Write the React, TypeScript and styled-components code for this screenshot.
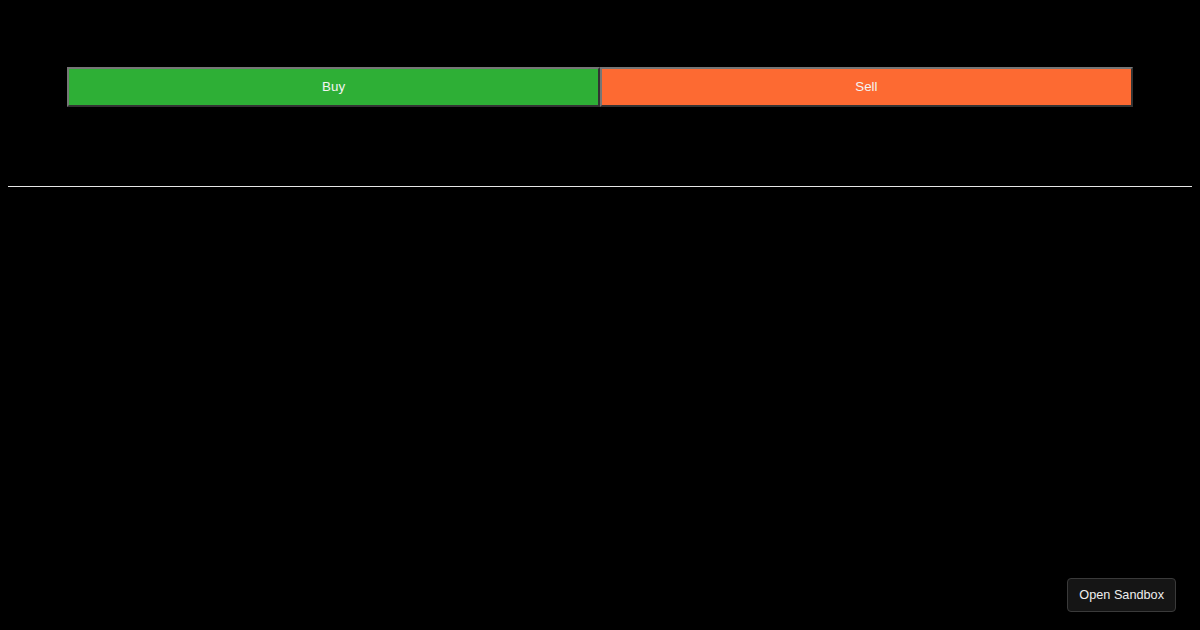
import styled, { createGlobalStyle } from 'styled-components'

const GlobalStyle = createGlobalStyle`
  html, body {
    background: #000;
  }
  body {
    margin: 8px;
    font-family: "Liberation Sans", Arial, sans-serif;
    color: #fff;
  }
`

const TradeBar = styled.div`
  display: flex;
  width: 90%;
  margin: 59px auto 0;
`

const TradeButton = styled.button<{ $tone: string }>`
  flex: 1;
  height: 40px;
  padding: 0 0 2px;
  background: ${(p) => p.$tone};
  color: #f4f4f4;
  font-family: "Liberation Sans", Arial, sans-serif;
  font-size: 13.33px;
  border: 2px solid;
  border-color: #767676 #333 #333 #767676;
  cursor: pointer;
`

const Divider = styled.hr`
  margin: 79px 0 0;
  border: none;
  border-top: 1px solid #e6e6e6;
  height: 0;
`

const SandboxButton = styled.button`
  position: fixed;
  right: 24px;
  bottom: 18px;
  height: 34px;
  padding: 0 11px;
  background: #151515;
  color: #eee;
  border: 1px solid #3a3a3a;
  border-radius: 4px;
  font-family: "Liberation Sans", Arial, sans-serif;
  font-size: 12.7px;
  cursor: pointer;
`

const App = () => {
  return (
    <>
      <GlobalStyle />
      <TradeBar>
        <TradeButton $tone="#2eaf36">Buy</TradeButton>
        <TradeButton $tone="#fd6a32">Sell</TradeButton>
      </TradeBar>
      <Divider />
      <SandboxButton>Open Sandbox</SandboxButton>
    </>
  )
}

export default App
